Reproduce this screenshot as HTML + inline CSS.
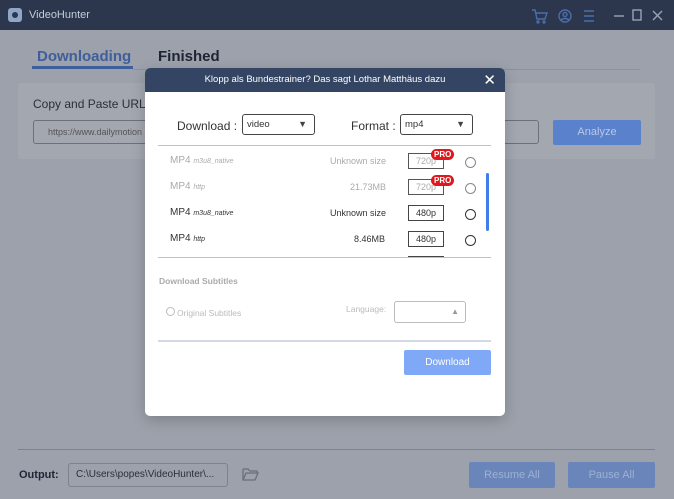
<!DOCTYPE html>
<html><head><meta charset="utf-8"><style>
*{margin:0;padding:0;box-sizing:border-box}
body{width:674px;height:499px;overflow:hidden;font-family:"Liberation Sans",sans-serif;background:#9ca1ab;position:relative}
.abs{position:absolute}
.tb{left:0;top:0;width:674px;height:30px;background:#2c374d}
.rad{width:11px;height:11px;border:1.3px solid #333;border-radius:50%}
.sel{height:21px;border:1px solid #444;border-radius:3px;font-size:9.5px;padding:0 4px;line-height:19px;color:#333}
.sel span{position:absolute;right:7px;top:0;font-size:9px;color:#444}
</style></head><body>
<div class="abs tb"></div>
<div class="abs" style="left:8px;top:8px;width:14px;height:14px;border-radius:3px;background:#8fa6c9"></div>
<div class="abs" style="left:12px;top:12px;width:6px;height:6px;border-radius:50%;background:#2c374d"></div>
<div class="abs" style="left:29px;top:9px;font-size:11px;color:#c6ccd8">VideoHunter</div>
<svg class="abs" style="left:530px;top:7px" width="140" height="18" fill="none" stroke="#4a6ea8" stroke-width="1.4">
<path d="M2 3h3l2 9h8l2-6H6"/><circle cx="8" cy="15" r="1"/><circle cx="14" cy="15" r="1"/>
<circle cx="35" cy="9" r="6"/><circle cx="35" cy="7.5" r="2"/><path d="M31 13c2-2 6-2 8 0"/>
<path d="M54 4h10M54 9h10M54 14h10"/>
<path d="M84 9h10" stroke="#9aa3b5"/><rect x="103" y="3" width="8" height="10" stroke="#9aa3b5"/><path d="M123 4l9 9M132 4l-9 9" stroke="#9aa3b5"/>
</svg>
<div class="abs" style="left:37px;top:48px;font-size:15px;font-weight:bold;color:#3f5f9c">Downloading</div>
<div class="abs" style="left:158px;top:48px;font-size:15px;font-weight:bold;color:#1e2433">Finished</div>
<div class="abs" style="left:32px;top:66px;width:101px;height:3px;background:#3f5f9c"></div>
<div class="abs" style="left:133px;top:69px;width:507px;height:1px;background:#8c919b"></div>
<div class="abs" style="left:18px;top:83px;width:637px;height:76px;background:#a3a7b0;border-radius:3px"></div>
<div class="abs" style="left:33px;top:97px;font-size:12px;color:#2a2f3a">Copy and Paste URL</div>
<div class="abs" style="left:33px;top:120px;width:506px;height:24px;border:1px solid #6b707a;border-radius:3px;background:#a3a7b0"></div>
<div class="abs" style="left:48px;top:127px;font-size:9px;color:#555">https://www.dailymotion</div>
<div class="abs" style="left:553px;top:120px;width:88px;height:25px;background:#5a81cc;border-radius:2px;color:#b9c8e6;font-size:11px;text-align:center;line-height:25px">Analyze</div>
<div class="abs" style="left:18px;top:449px;width:637px;height:1px;background:#7d828c"></div>
<div class="abs" style="left:19px;top:469px;font-size:11px;font-weight:bold;color:#1e2433">Output:</div>
<div class="abs" style="left:68px;top:463px;width:160px;height:24px;border:1px solid #7d828c;border-radius:3px;font-size:10px;color:#2a2f3a;padding:5px 7px">C:\Users\popes\VideoHunter\...</div>
<svg class="abs" style="left:242px;top:467px" width="18" height="15" fill="none" stroke="#6a6f79" stroke-width="1.3"><path d="M1 2h5l2 2h7v2M1 2v11h12l3-7H4l-3 7"/></svg>
<div class="abs" style="left:469px;top:462px;width:86px;height:26px;background:#6a85ba;border-radius:2px;color:#9fb0d2;font-size:11px;text-align:center;line-height:26px">Resume All</div>
<div class="abs" style="left:568px;top:462px;width:87px;height:26px;background:#6a85ba;border-radius:2px;color:#9fb0d2;font-size:11px;text-align:center;line-height:26px">Pause All</div>

<div class="abs" style="left:145px;top:68px;width:360px;height:348px;background:#fff;border-radius:5px;overflow:hidden;box-shadow:0 4px 14px rgba(0,0,0,.2)">
<div style="height:24px;background:#344563;color:#fff;font-size:9.5px;text-align:center;line-height:24px">Klopp als Bundestrainer? Das sagt Lothar Matthäus dazu</div>
<div class="abs" style="right:9px;top:3px;color:#fff;font-size:15px">✕</div>
<div class="abs" style="left:32px;top:51px;font-size:12px;color:#333">Download :</div>
<div class="abs sel" style="left:97px;top:46px;width:73px">video<span>▼</span></div>
<div class="abs" style="left:206px;top:51px;font-size:12px;color:#333">Format :</div>
<div class="abs sel" style="left:255px;top:46px;width:73px">mp4<span>▼</span></div>
<div class="abs" style="left:13px;top:77px;width:333px;height:1px;background:#b8c3da"></div>
<div class="abs" style="left:13px;top:189px;width:333px;height:1px;background:#b8c3da"></div>
<div class="abs" style="left:341px;top:105px;width:3px;height:58px;background:#3f7fe8;border-radius:2px"></div>
<div class="abs" style="left:0;top:78px;width:360px;height:111px;overflow:hidden;font-size:10px">
 <div class="abs" style="left:25px;top:9px;color:#aaa">MP4 <i style="font-size:7px">m3u8_native</i></div><div class="abs" style="left:185px;top:10px;color:#aaa;font-size:9px">Unknown size</div>
 <div class="abs" style="left:263px;top:7px;width:36px;height:16px;border:1px solid #555;font-size:9px;color:#aaa;text-align:center;line-height:14px">720p</div>
 <div class="abs" style="left:286px;top:3px;background:#e0171b;color:#fff;font-size:8px;font-weight:bold;border-radius:6px;padding:1px 3px">PRO</div>
 <div class="abs rad" style="left:320px;top:11px;border-color:#888"></div>
 <div class="abs" style="left:25px;top:35px;color:#aaa">MP4 <i style="font-size:7px">http</i></div><div class="abs" style="left:205px;top:36px;color:#aaa;font-size:9px">21.73MB</div>
 <div class="abs" style="left:263px;top:33px;width:36px;height:16px;border:1px solid #555;font-size:9px;color:#aaa;text-align:center;line-height:14px">720p</div>
 <div class="abs" style="left:286px;top:29px;background:#e0171b;color:#fff;font-size:8px;font-weight:bold;border-radius:6px;padding:1px 3px">PRO</div>
 <div class="abs rad" style="left:320px;top:37px;border-color:#888"></div>
 <div class="abs" style="left:25px;top:61px;color:#333">MP4 <i style="font-size:7px">m3u8_native</i></div><div class="abs" style="left:185px;top:62px;color:#333;font-size:9px">Unknown size</div>
 <div class="abs" style="left:263px;top:59px;width:36px;height:16px;border:1px solid #444;font-size:9px;color:#333;text-align:center;line-height:14px">480p</div>
 <div class="abs rad" style="left:320px;top:63px"></div>
 <div class="abs" style="left:25px;top:87px;color:#333">MP4 <i style="font-size:7px">http</i></div><div class="abs" style="left:209px;top:88px;color:#333;font-size:9px">8.46MB</div>
 <div class="abs" style="left:263px;top:85px;width:36px;height:16px;border:1px solid #444;font-size:9px;color:#333;text-align:center;line-height:14px">480p</div>
 <div class="abs rad" style="left:320px;top:89px"></div>
 <div class="abs" style="left:263px;top:110px;width:36px;height:16px;border:1px solid #444"></div>
</div>
<div class="abs" style="left:14px;top:208px;font-size:8.5px;font-weight:bold;color:#aaa">Download Subtitles</div>
<div class="abs rad" style="left:21px;top:239px;width:9px;height:9px;border-color:#bbb;border-width:1px"></div>
<div class="abs" style="left:32px;top:240px;font-size:8.5px;color:#bbb">Original Subtitles</div>
<div class="abs" style="left:201px;top:236px;font-size:8.5px;color:#bbb">Language:</div>
<div class="abs" style="left:249px;top:233px;width:72px;height:22px;border:1px solid #bbb;border-radius:3px"><span style="position:absolute;right:6px;top:5px;font-size:8px;color:#999">▲</span></div>
<div class="abs" style="left:13px;top:272px;width:333px;height:2px;background:#d5d9e3"></div>
<div class="abs" style="left:259px;top:282px;width:87px;height:25px;background:#7fa8f7;border-radius:2px;color:#fff;font-size:10px;text-align:center;line-height:25px">Download</div>
</div>
</body></html>
